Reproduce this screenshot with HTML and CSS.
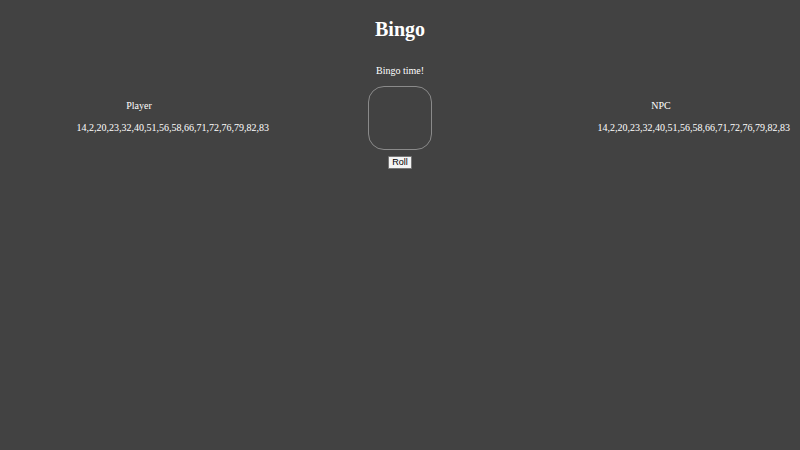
FILE: index.html
```html
<!DOCTYPE html>
<html lang="en">
<head>
  <meta charset="UTF-8">
  <meta name="viewport" content="width=device-width, initial-scale=1.0">
  <title>Bingo</title>
  <link rel="stylesheet" href="styles.css">
</head>
<body>
  <h1 class="title">Bingo</h1>
  <p class="status">Bingo time!</p>

  <div class="board">
    <div class="side">
      <div class="name">Player</div>
      <div class="numbers">14,2,20,23,32,40,51,56,58,66,71,72,76,79,82,83</div>
    </div>

    <div class="middle">
      <div class="ball"></div>
      <button class="roll">Roll</button>
    </div>

    <div class="side npc">
      <div class="name">NPC</div>
      <div class="numbers">14,2,20,23,32,40,51,56,58,66,71,72,76,79,82,83</div>
    </div>
  </div>
</body>
</html>
```

FILE: styles.css
```css
body {
  margin: 0;
  padding: 0 5px;
  background-color: #424242;
  color: #fff;
  font-family: "Liberation Serif", "Times New Roman", serif;
  font-size: 10px;
}
.title {
  font-size: 20px;
  line-height: 23px;
  margin: 18px 0 0;
  text-align: center;
}
.status {
  line-height: 12px;
  margin: 24px 0 0;
  text-align: center;
}
.board {
  display: flex;
  justify-content: space-between;
  margin-top: 9px;
}
.side {
  width: 268px;
  padding-top: 14px;
}
.name {
  line-height: 12px;
  text-align: center;
}
.numbers {
  line-height: 12px;
  margin-top: 10px;
  text-align: right;
  padding-right: 4px;
}
.npc .numbers {
  padding-right: 5px;
}
.middle {
  display: flex;
  flex-direction: column;
  align-items: center;
}
.ball {
  width: 62px;
  height: 62px;
  border: 1px solid #8a8a8a;
  border-radius: 16px;
}
.roll {
  margin-top: 6px;
  height: 13px;
  padding: 0 3px;
  font-family: "Liberation Sans", Arial, sans-serif;
  font-size: 9px;
  line-height: 11px;
  color: #000;
  background: #f4f4f4;
  border: 1px solid #767676;
  border-radius: 1px;
}
```
